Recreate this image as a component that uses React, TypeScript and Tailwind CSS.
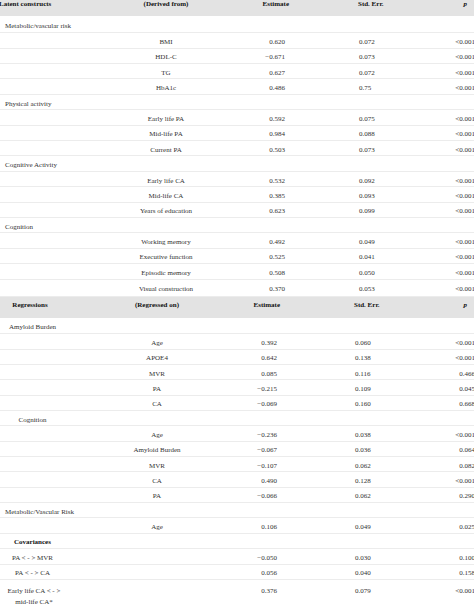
import React from "react";

type R1 = { kind: "group"; label: string } | { kind: "item"; d: string; e: string; s: string; p: string };

const sec1: R1[] = [
  { kind: "group", label: "Metabolic/vascular risk" },
  { kind: "item", d: "BMI", e: "0.620", s: "0.072", p: "<0.001" },
  { kind: "item", d: "HDL-C", e: "\u22120.671", s: "0.073", p: "<0.001" },
  { kind: "item", d: "TG", e: "0.627", s: "0.072", p: "<0.001" },
  { kind: "item", d: "HbA1c", e: "0.486", s: "0.75", p: "<0.001" },
  { kind: "group", label: "Physical activity" },
  { kind: "item", d: "Early life PA", e: "0.592", s: "0.075", p: "<0.001" },
  { kind: "item", d: "Mid-life PA", e: "0.984", s: "0.088", p: "<0.001" },
  { kind: "item", d: "Current PA", e: "0.503", s: "0.073", p: "<0.001" },
  { kind: "group", label: "Cognitive Activity" },
  { kind: "item", d: "Early life CA", e: "0.532", s: "0.092", p: "<0.001" },
  { kind: "item", d: "Mid-life CA", e: "0.385", s: "0.093", p: "<0.001" },
  { kind: "item", d: "Years of education", e: "0.623", s: "0.099", p: "<0.001" },
  { kind: "group", label: "Cognition" },
  { kind: "item", d: "Working memory", e: "0.492", s: "0.049", p: "<0.001" },
  { kind: "item", d: "Executive function", e: "0.525", s: "0.041", p: "<0.001" },
  { kind: "item", d: "Episodic memory", e: "0.508", s: "0.050", p: "<0.001" },
  { kind: "item", d: "Visual construction", e: "0.370", s: "0.053", p: "<0.001" },
];

type R2 =
  | { kind: "group"; label: string; cls: string }
  | { kind: "item"; d: string; e: string; s: string; p: string }
  | { kind: "cov"; label: string; e: string; s: string; p: string };

const sec2: R2[] = [
  { kind: "group", label: "Amyloid Burden", cls: "w-[65px] text-center" },
  { kind: "item", d: "Age", e: "0.392", s: "0.060", p: "<0.001" },
  { kind: "item", d: "APOE4", e: "0.642", s: "0.138", p: "<0.001" },
  { kind: "item", d: "MVR", e: "0.085", s: "0.116", p: "0.466" },
  { kind: "item", d: "PA", e: "\u22120.215", s: "0.109", p: "0.045" },
  { kind: "item", d: "CA", e: "\u22120.069", s: "0.160", p: "0.668" },
  { kind: "group", label: "Cognition", cls: "w-[65px] text-center" },
  { kind: "item", d: "Age", e: "\u22120.236", s: "0.038", p: "<0.001" },
  { kind: "item", d: "Amyloid Burden", e: "\u22120.067", s: "0.036", p: "0.064" },
  { kind: "item", d: "MVR", e: "\u22120.107", s: "0.062", p: "0.082" },
  { kind: "item", d: "CA", e: "0.490", s: "0.128", p: "<0.001" },
  { kind: "item", d: "PA", e: "\u22120.066", s: "0.062", p: "0.290" },
  { kind: "group", label: "Metabolic/Vascular Risk", cls: "pl-[5px]" },
  { kind: "item", d: "Age", e: "0.106", s: "0.049", p: "0.025" },
  { kind: "group", label: "Covariances", cls: "w-[65px] text-center font-bold text-[#111]" },
  { kind: "cov", label: "PA < - > MVR", e: "\u22120.050", s: "0.030", p: "0.100" },
  { kind: "cov", label: "PA < - > CA", e: "0.056", s: "0.040", p: "0.158" },
];

const G1 = "grid grid-cols-[122px_88px_100px_90px_75px]";
const G2 = "grid grid-cols-[112px_90px_100px_90px_83px]";
const LINE = "border-b border-[#ececec]";

export default function App() {
  return (
    <div className="w-[474px] h-[605px] overflow-hidden bg-white font-['Liberation_Serif',serif] text-[7px] leading-[9px] text-[#333]">
      <div className="w-[475px]">
        {/* Section 1 header */}
        <div className={`${G1} h-[16px] bg-[#e3e3e3] items-start font-bold text-[#111]`}>
          <div className="-ml-[1px] whitespace-nowrap">Latent constructs</div>
          <div className="text-center whitespace-nowrap">(Derived from)</div>
          <div className="text-right pr-[21px]">Estimate</div>
          <div className="pl-[48px] whitespace-nowrap">Std. Err.</div>
          <div className="text-right pr-[8px] italic">p</div>
        </div>
        {sec1.map((r, i) => {
          const h =
            i === 0 ? "h-[17.3px] pt-[5px]" : i === sec1.length - 1 ? "h-[17.3px] pt-[4px]" : "h-[15.4px] pt-[4px]";
          if (r.kind === "group") {
            return (
              <div key={i} className={`${G1} ${h} ${LINE} items-center`}>
                <div className="pl-[5px] whitespace-nowrap col-span-5">{r.label}</div>
              </div>
            );
          }
          return (
            <div key={i} className={`${G1} ${h} ${LINE} items-center`}>
              <div />
              <div className="text-center whitespace-nowrap">{r.d}</div>
              <div className="text-right pr-[25px]">{r.e}</div>
              <div className="pl-[49px]">{r.s}</div>
              <div className="text-right">{r.p}</div>
            </div>
          );
        })}
        {/* Section 2 header */}
        <div className={`${G2} h-[21.3px] bg-[#e3e3e3] items-center pb-[3px] font-bold text-[#111]`}>
          <div className="w-[60px] text-center whitespace-nowrap">Regressions</div>
          <div className="text-center whitespace-nowrap">(Regressed on)</div>
          <div className="text-right pr-[22px]">Estimate</div>
          <div className="pl-[52px] whitespace-nowrap">Std. Err.</div>
          <div className="text-right pr-[8px] italic">p</div>
        </div>
        {sec2.map((r, i) => {
          const h = i === 0 ? "h-[16px] pt-[4px]" : "h-[15.36px] pt-[4px]";
          if (r.kind === "group") {
            return (
              <div key={i} className={`${G2} ${h} ${LINE} items-center`}>
                <div className={`whitespace-nowrap col-span-5 ${r.cls}`}>{r.label}</div>
              </div>
            );
          }
          if (r.kind === "cov") {
            return (
              <div key={i} className={`${G2} ${h} ${LINE} items-center`}>
                <div className="w-[65px] text-center whitespace-nowrap">{r.label}</div>
                <div />
                <div className="text-right pr-[25px]">{r.e}</div>
                <div className="pl-[53px]">{r.s}</div>
                <div className="text-right">{r.p}</div>
              </div>
            );
          }
          return (
            <div key={i} className={`${G2} ${h} ${LINE} items-center`}>
              <div />
              <div className="text-center whitespace-nowrap">{r.d}</div>
              <div className="text-right pr-[25px]">{r.e}</div>
              <div className="pl-[53px]">{r.s}</div>
              <div className="text-right">{r.p}</div>
            </div>
          );
        })}
        {/* Last covariance row, two lines */}
        <div className={`${G2} h-[30px] pt-[6px] items-start leading-[11px]`}>
          <div className="w-[68px] text-center">
            <div className="whitespace-nowrap">Early life CA &lt; - &gt;</div>
            <div className="whitespace-nowrap">mid-life CA*</div>
          </div>
          <div />
          <div className="text-right pr-[25px]">0.376</div>
          <div className="pl-[53px]">0.079</div>
          <div className="text-right">{"<0.001"}</div>
        </div>
      </div>
    </div>
  );
}
